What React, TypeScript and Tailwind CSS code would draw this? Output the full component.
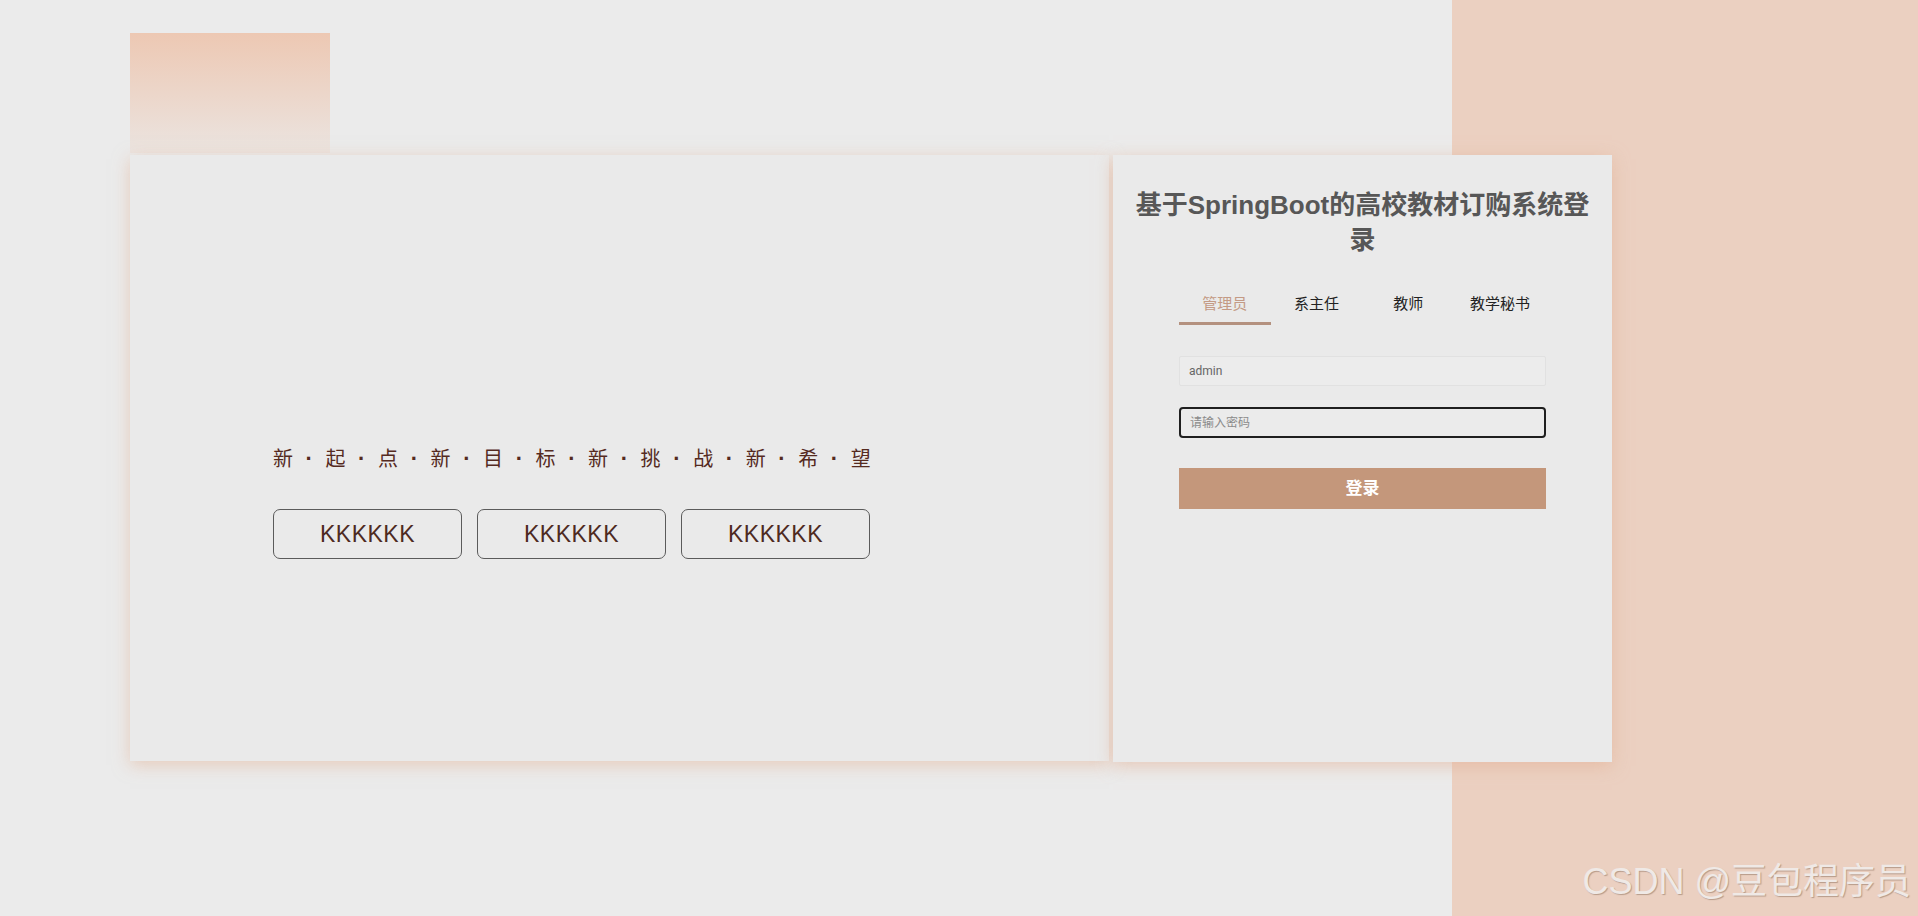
import { useState } from "react";

const slogan = ["新", "起", "点", "新", "目", "标", "新", "挑", "战", "新", "希", "望"];
const roles = ["管理员", "系主任", "教师", "教学秘书"];

const LeftCard = () => {
  return (
    <div className="flex h-[606px] w-[979px] shrink-0 flex-col bg-[#eaeaea] pl-[143px] pt-[290px] shadow-[0_4px_16px_rgba(226,176,148,0.55)]">
      <div className="flex w-[598px] items-center justify-between text-[20px] leading-[28px] text-[#552a1f]">
        {slogan.map((ch, i) => (
          <span key={i} className="contents">
            <span>{ch}</span>
            {i < slogan.length - 1 && (
              <span className="text-[22px] font-bold leading-[28px]">·</span>
            )}
          </span>
        ))}
      </div>
      <div className="mt-[36px] flex gap-[15px]">
        {[0, 1, 2].map((i) => (
          <button
            key={i}
            className="h-[50px] w-[189px] rounded-[7px] border border-[#5b5b5b] bg-transparent font-['Liberation_Sans',sans-serif] text-[23px] tracking-[0.5px] text-[#4e2a22]"
          >
            KKKKKK
          </button>
        ))}
      </div>
    </div>
  );
};

const LoginCard = () => {
  const [active, setActive] = useState(0);

  return (
    <div className="flex h-[607px] w-[499px] shrink-0 flex-col items-center bg-[#eaeaea] px-[20px] pt-[33px] shadow-[0_4px_16px_rgba(226,176,148,0.6)]">
      <h1 className="text-center text-[26px] font-bold leading-[35px] text-[#575757]">
        基于SpringBoot的高校教材订购系统登录
      </h1>
      <div className="mt-[35px] flex w-[367px]">
        {roles.map((r, i) => (
          <div
            key={r}
            onClick={() => setActive(i)}
            className={
              i === active
                ? "w-[92px] cursor-pointer border-b-[3px] border-[#b4917f] pb-[7px] text-center text-[15px] leading-[22px] text-[#c49a85]"
                : "w-[92px] cursor-pointer border-b-[3px] border-transparent pb-[7px] text-center text-[15px] leading-[22px] text-[#222]"
            }
          >
            {r}
          </div>
        ))}
      </div>
      <input
        defaultValue="admin"
        className="mt-[31px] h-[30px] w-[367px] rounded-[2px] border border-[#e1e1e1] bg-[#ececec] px-[9px] font-['Roboto','Noto_Sans_CJK_SC',sans-serif] text-[12px] text-[#666] outline-none"
      />
      <input
        type="password"
        placeholder="请输入密码"
        className="mt-[21px] h-[31px] w-[367px] rounded-[4px] border-2 border-[#1f1f1f] bg-[#ebebeb] px-[9px] text-[12px] outline-none placeholder:text-[#8a8a8a]"
      />
      <button className="mt-[30px] h-[41px] w-[367px] bg-[#c4977b] text-[17px] font-bold text-white">
        登录
      </button>
    </div>
  );
};

export default function App() {
  return (
    <div className="relative h-[916px] w-full overflow-hidden bg-[linear-gradient(to_right,#ebebeb_1452px,#ebd0c1_1452px)] pl-[130px] pt-[33px] font-['Liberation_Sans','Noto_Sans_CJK_SC',sans-serif]">
      <div className="h-[120px] w-[200px] bg-[linear-gradient(to_bottom,#edc8b3,#ebe4e0)]" />
      <div className="mt-[2px] flex gap-[4px]">
        <LeftCard />
        <LoginCard />
      </div>
      <div className="absolute bottom-[16px] right-[7px] text-[36px] leading-none text-[#efe9e6] [text-shadow:1px_1px_1px_rgba(120,90,70,0.45)]">
        CSDN @豆包程序员
      </div>
    </div>
  );
}
